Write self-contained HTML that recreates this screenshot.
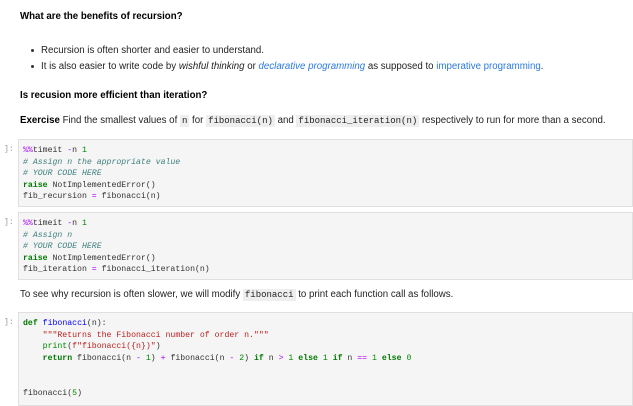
<!DOCTYPE html>
<html><head><meta charset="utf-8"><style>
body{margin:0;width:633px;height:404px;overflow:hidden;background:#fff;font-family:"Liberation Sans",sans-serif;color:#000;position:relative}
.t{position:absolute;font-size:9.7px;white-space:nowrap;color:#222}
b{font-weight:bold;color:#000}
.a{color:#2a7ae2}
code{font-family:"Liberation Mono",monospace;background:#eee;padding:1px 2px;font-size:9px}
.cell{position:absolute;left:18px;right:0;background:#f5f5f5;border:1px solid #e0e0e0}
.cell pre{margin:0;position:absolute;left:4px;font-family:"Liberation Mono",monospace;font-size:8.2px;line-height:11.6px;color:#333}
.p{position:absolute;left:4px;font-family:"Liberation Mono",monospace;font-size:8.2px;color:#999}
.m{color:#a0f}.g{color:#080}.k{color:#070;font-weight:bold}.cm{color:#408080;font-style:italic}.s{color:#b22}.f{color:#00f}
.dot{display:inline-block;width:3px;height:3px;border-radius:50%;background:#333;margin-right:7px;vertical-align:middle}
</style></head><body>
<div class="t" style="left:20px;top:11px;font-weight:bold;color:#000">What are the benefits of recursion?</div>
<div class="t" style="left:31px;top:45px"><span class="dot"></span>Recursion is often shorter and easier to understand.</div>
<div class="t" style="left:31px;top:61px"><span class="dot"></span>It is also easier to write code by <i>wishful thinking</i> or <i class="a">declarative programming</i> as supposed to <span class="a">imperative programming</span>.</div>
<div class="t" style="left:20px;top:90px;font-weight:bold;color:#000">Is recusion more efficient than iteration?</div>
<div class="t" style="left:20px;top:115px"><b>Exercise</b> Find the smallest values of <code>n</code> for <code>fibonacci(n)</code> and <code>fibonacci_iteration(n)</code> respectively to run for more than a second.</div>

<div class="p" style="top:145px">]:</div>
<div class="cell" style="top:139px;height:66px"><pre style="top:5px"><span class="m">%%</span>timeit <span class="m">-</span>n <span class="g">1</span>
<span class="cm"># Assign n the appropriate value</span>
<span class="cm"># YOUR CODE HERE</span>
<span class="k">raise</span> NotImplementedError()
fib_recursion <span class="m">=</span> fibonacci(n)</pre></div>

<div class="p" style="top:218px">]:</div>
<div class="cell" style="top:212px;height:66px"><pre style="top:5px"><span class="m">%%</span>timeit <span class="m">-</span>n <span class="g">1</span>
<span class="cm"># Assign n</span>
<span class="cm"># YOUR CODE HERE</span>
<span class="k">raise</span> NotImplementedError()
fib_iteration <span class="m">=</span> fibonacci_iteration(n)</pre></div>

<div class="t" style="left:20px;top:289px">To see why recursion is often slower, we will modify <code>fibonacci</code> to print each function call as follows.</div>

<div class="p" style="top:318px">]:</div>
<div class="cell" style="top:312px;height:92px"><pre style="top:5px"><span class="k">def</span> <span class="f">fibonacci</span>(n):
    <span class="s">"""Returns the Fibonacci number of order n."""</span>
    <span class="g">print</span>(<span class="s">f"fibonacci(</span><span class="s">{n}</span><span class="s">)"</span>)
    <span class="k">return</span> fibonacci(n <span class="m">-</span> <span class="g">1</span>) <span class="m">+</span> fibonacci(n <span class="m">-</span> <span class="g">2</span>) <span class="k">if</span> n <span class="m">&gt;</span> <span class="g">1</span> <span class="k">else</span> <span class="g">1</span> <span class="k">if</span> n <span class="m">==</span> <span class="g">1</span> <span class="k">else</span> <span class="g">0</span>


fibonacci(<span class="g">5</span>)</pre></div>
</body></html>
